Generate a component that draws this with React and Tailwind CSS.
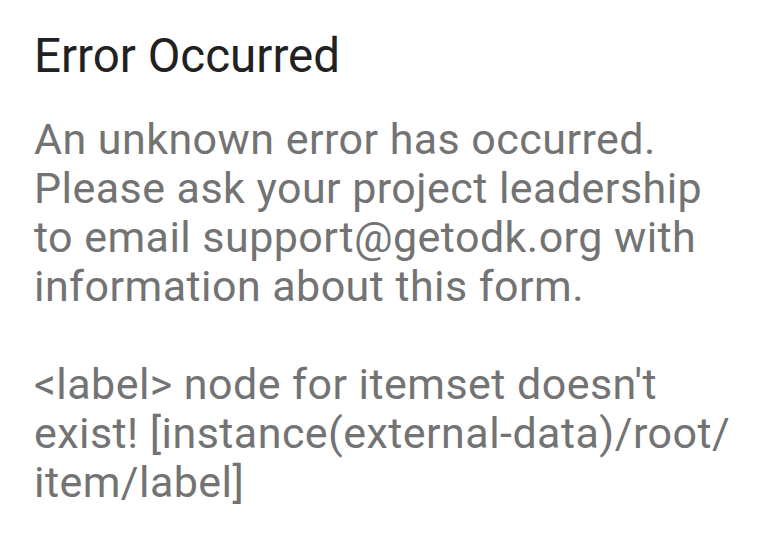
export default function App() {
  const lines1 = [
    "An unknown error has occurred.",
    "Please ask your project leadership",
    "to email support@getodk.org with",
    "information about this form.",
  ];
  const lines2 = [
    "<label> node for itemset doesn't",
    "exist! [instance(external-data)/root/",
    "item/label]",
  ];
  return (
    <div
      className="w-[772px] h-[534px] bg-white overflow-hidden pl-[34px] pt-[28px]"
      style={{ fontFamily: "Roboto, 'Liberation Sans', sans-serif" }}
    >
      <div className="text-[47.5px] leading-[56px] text-[#212121] whitespace-nowrap">Error Occurred</div>
      <div className="mt-[31px] text-[43px] leading-[49px] tracking-[0.45px] text-[#737373] whitespace-nowrap">
        {lines1.map((l) => (
          <div key={l}>{l}</div>
        ))}
        <div>&nbsp;</div>
        {lines2.map((l) => (
          <div key={l}>{l}</div>
        ))}
      </div>
    </div>
  );
}
